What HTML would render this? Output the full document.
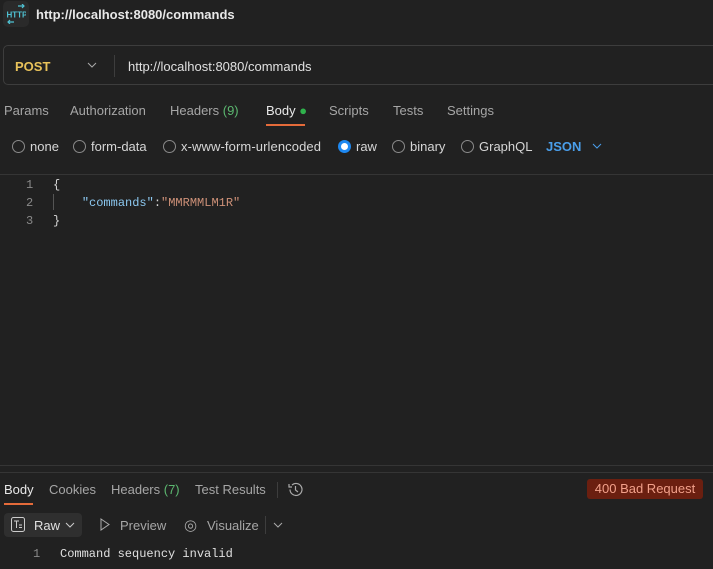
<!DOCTYPE html>
<html><head><style>
body{margin:0;width:713px;height:569px;background:#212121;font-family:"Liberation Sans",sans-serif;color:#d6d6d6;position:relative;overflow:hidden;font-size:13px}
.a{position:absolute;white-space:nowrap}
.mono{font-family:"Liberation Mono",monospace}
.g{color:#a6a6a6}
.rad{display:inline-block;width:11px;height:11px;border:1px solid #8a8a8a;border-radius:50%;vertical-align:-2px;margin-right:5px}
</style></head><body>
<div class="a" style="left:3px;top:1px;width:26px;height:26px;background:#2a2a2a;border-radius:5px"></div>
<svg class="a" style="left:6px;top:4px" width="20" height="20" viewBox="0 0 20 20"><path d="M12 2h6M16 0l2 2-2 2M2 18h6M4 16l-2 2 2 2" stroke="#4fc3d4" fill="none" stroke-width="1.2"/><text x="0.5" y="13.5" font-size="8" font-family="Liberation Sans" fill="#4fc3d4" font-weight="bold">HTTP</text></svg>
<div class="a" style="left:36px;top:7px;font-weight:bold;color:#e8e8e8">http://localhost:8080/commands</div>
<div class="a" style="left:3px;top:45px;width:720px;height:40px;border:1px solid #3d3d3d;border-radius:5px;box-sizing:border-box"></div>
<div class="a" style="left:15px;top:59px;font-weight:bold;color:#e8c25a">POST</div>
<svg class="a" style="left:87px;top:62px" width="10" height="6"><path d="M1 1l4 4 4-4" stroke="#aaa" fill="none"/></svg>
<div class="a" style="left:114px;top:55px;width:1px;height:22px;background:#3d3d3d"></div>
<div class="a" style="left:128px;top:59px;color:#e0e0e0">http://localhost:8080/commands</div>
<div class="a g" style="left:4px;top:103px">Params</div>
<div class="a g" style="left:70px;top:103px">Authorization</div>
<div class="a g" style="left:170px;top:103px">Headers <span style="color:#5cb870">(9)</span></div>
<div class="a" style="left:266px;top:103px;color:#e8e8e8">Body <span style="color:#2fb24c">●</span></div>
<div class="a" style="left:266px;top:124px;width:39px;height:2px;background:#e56b3a"></div>
<div class="a g" style="left:329px;top:103px">Scripts</div>
<div class="a g" style="left:393px;top:103px">Tests</div>
<div class="a g" style="left:447px;top:103px">Settings</div>
<div class="a" style="left:12px;top:139px"><span class="rad"></span>none</div>
<div class="a" style="left:73px;top:139px"><span class="rad"></span>form-data</div>
<div class="a" style="left:163px;top:139px;letter-spacing:0.1px"><span class="rad"></span>x-www-form-urlencoded</div>
<div class="a" style="left:338px;top:139px"><span class="rad" style="border:3px solid #1e88f0;background:#fff;width:7px;height:7px"></span>raw</div>
<div class="a" style="left:392px;top:139px"><span class="rad"></span>binary</div>
<div class="a" style="left:461px;top:139px"><span class="rad"></span>GraphQL</div>
<div class="a" style="left:546px;top:139px;color:#4a9eea;font-weight:bold">JSON</div>
<svg class="a" style="left:592px;top:143px" width="10" height="6"><path d="M1 1l4 4 4-4" stroke="#4a9eea" fill="none"/></svg>
<div class="a" style="left:0;top:174px;width:713px;height:1px;background:#353535"></div>
<div class="mono a" style="left:26px;top:176px;font-size:12px;line-height:18px;color:#8a8a8a">1<br>2<br>3</div>
<div class="a" style="left:53px;top:194px;width:1px;height:16px;background:#555"></div>
<div class="mono a" style="left:53px;top:176px;font-size:12px;line-height:18px">{<br>&nbsp;&nbsp;&nbsp;&nbsp;<span style="color:#8cc8f0">"commands"</span>:<span style="color:#ce9178">"MMRMMLM1R"</span><br>}</div>
<div class="a" style="left:0;top:465px;width:713px;height:1px;background:#353535"></div>
<div class="a" style="left:0;top:472px;width:713px;height:1px;background:#353535"></div>
<div class="a" style="left:4px;top:482px;color:#e8e8e8">Body</div>
<div class="a" style="left:4px;top:503px;width:29px;height:2px;background:#e56b3a"></div>
<div class="a g" style="left:49px;top:482px">Cookies</div>
<div class="a g" style="left:111px;top:482px">Headers <span style="color:#5cb870">(7)</span></div>
<div class="a g" style="left:195px;top:482px">Test Results</div>
<div class="a" style="left:277px;top:482px;width:1px;height:16px;background:#3d3d3d"></div>
<svg class="a" style="left:287px;top:481px" width="17" height="17" viewBox="0 0 17 17"><path d="M3 8.5A6 6 0 1 0 5 4M2 3v3h3M8.5 5v4l2.5 2" stroke="#aaa" fill="none" stroke-width="1.2"/></svg>
<div class="a" style="left:587px;top:479px;width:116px;height:20px;background:#6b1f10;border-radius:3px;color:#f2a08a;text-align:center;line-height:20px">400 Bad Request</div>
<div class="a" style="left:4px;top:513px;width:78px;height:24px;background:#2f2f2f;border-radius:4px"></div>
<svg class="a" style="left:11px;top:517px" width="14" height="15"><rect x="0.5" y="0.5" width="13" height="14" rx="2" stroke="#ccc" fill="none"/><path d="M3 4h5M5.5 4v7M8 8h3M8 10.5h3" stroke="#ccc"/></svg>
<div class="a" style="left:34px;top:518px;color:#e0e0e0">Raw</div>
<svg class="a" style="left:65px;top:522px" width="10" height="6"><path d="M1 1l4 4 4-4" stroke="#ccc" fill="none"/></svg>
<svg class="a" style="left:100px;top:518px" width="10" height="13"><path d="M1 1l8 5.5-8 5.5z" stroke="#aaa" fill="none"/></svg>
<div class="a g" style="left:120px;top:518px">Preview</div>
<div class="a g" style="left:184px;top:516px;font-size:15px">◎</div>
<div class="a g" style="left:207px;top:518px">Visualize</div>
<div class="a" style="left:265px;top:516px;width:1px;height:18px;background:#3d3d3d"></div>
<svg class="a" style="left:273px;top:522px" width="10" height="6"><path d="M1 1l4 4 4-4" stroke="#aaa" fill="none"/></svg>
<div class="mono a" style="left:33px;top:547px;font-size:12px;color:#8a8a8a">1</div>
<div class="mono a" style="left:60px;top:547px;font-size:12px;color:#e0e0e0">Command sequency invalid</div>
</body></html>
